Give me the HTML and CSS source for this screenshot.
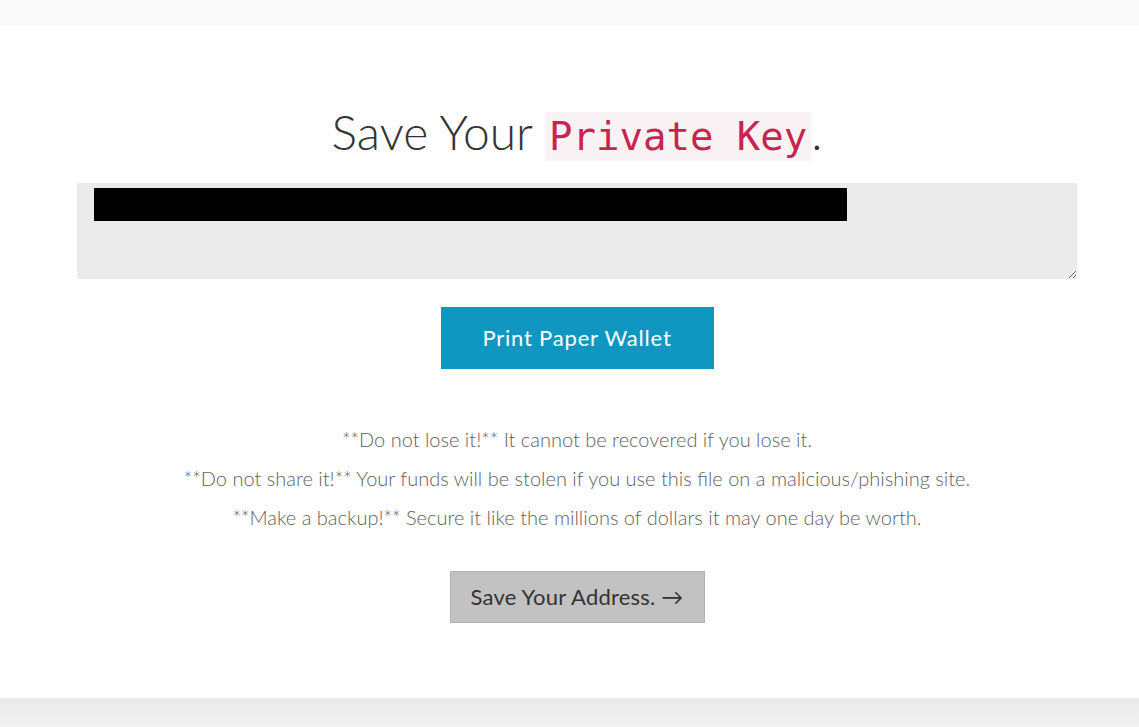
FILE: index.html
```html
<!DOCTYPE html>
<html lang="en">
<head>
    <meta charset="UTF-8">
    <meta name="viewport" content="width=device-width, initial-scale=1.0">
    <title>Save Your Private Key</title>
    <link rel="stylesheet" href="styles.css">
</head>
<body>

    <div class="topbar"></div>

    <div class="page">
        <h1 class="title">Save Your <code>Private Key</code>.</h1>

        <div class="key-box">
            <textarea class="key-field" readonly></textarea>
            <span class="redact"></span>
        </div>

        <button class="btn btn-print">Print Paper Wallet</button>

        <div class="notes">
            <p>**Do not lose it!** It cannot be recovered if you lose it.</p>
            <p>**Do not share it!** Your funds will be stolen if you use this file on a malicious/phishing site.</p>
            <p>**Make a backup!** Secure it like the millions of dollars it may one day be worth.</p>
        </div>

        <button class="btn btn-next">Save Your Address. &rarr;</button>
    </div>

    <div class="footer"></div>

</body>
</html>
```

FILE: styles.css
```css
body {
    font-family: Lato, "Open Sans", sans-serif;
    margin: 0;
    background-color: #fff;
    color: #333;
}
.topbar {
    height: 26px;
    background-color: #f9f9f9;
}
.page {
    height: 595px;
    padding: 77px 0 0 15px;
    display: flex;
    flex-direction: column;
    align-items: center;
}
.title {
    margin: 0 0 22px;
    font-size: 48px;
    font-weight: 300;
    line-height: 1.2;
    color: #333;
}
.title code {
    font-family: "DejaVu Sans Mono", "Liberation Mono", monospace;
    font-size: 39px;
    font-weight: 400;
    padding: 2px 4px;
    color: #c7254e;
    background-color: #f9f2f4;
}
.key-box {
    position: relative;
    width: 1000px;
    height: 96px;
}
.key-field {
    display: block;
    width: 100%;
    height: 100%;
    box-sizing: border-box;
    border: none;
    background-color: #ebebeb;
    resize: vertical;
}
.redact {
    position: absolute;
    left: 17px;
    top: 5px;
    width: 753px;
    height: 33px;
    background-color: #000;
}
.btn {
    font-family: Lato, sans-serif;
    font-size: 22px;
    line-height: 24px;
    cursor: pointer;
}
.btn-print {
    margin-top: 28px;
    width: 273px;
    height: 62px;
    border: none;
    letter-spacing: 0.8px;
    background-color: #1097c1;
    color: #fff;
}
.notes {
    margin-top: 57px;
    text-align: center;
    font-size: 20px;
    font-weight: 300;
    color: #5f5f5f;
}
.notes p {
    margin: 0 0 12px;
    line-height: 27px;
}
.btn-next {
    margin-top: 28px;
    width: 255px;
    height: 52px;
    border: 1px solid #b3b3b3;
    letter-spacing: 0.2px;
    background-color: #c2c2c2;
    color: #333;
}
.footer {
    height: 29px;
    background: linear-gradient(#e9e9e9, #f2f2f2);
}
```
